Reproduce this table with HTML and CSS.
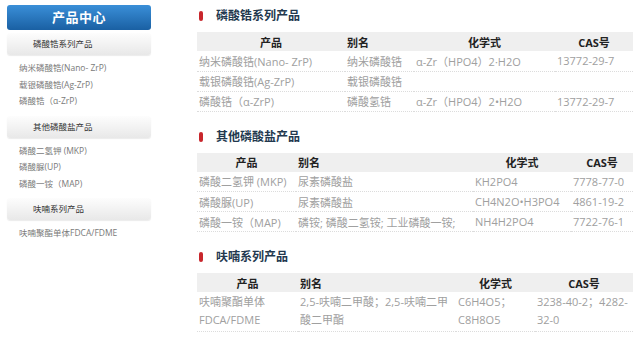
FILE: index.html
```html
<!DOCTYPE html>
<html lang="zh-CN">
<head>
<meta charset="utf-8">
<title>产品中心</title>
<link rel="stylesheet" href="styles.css">
</head>
<body>
<div class="page">
  <aside class="sidebar">
    <div class="side-head">产品中心</div>
    <div class="cat">磷酸锆系列产品</div>
    <ul class="items">
      <li>纳米磷酸锆(Nano- ZrP)</li>
      <li>载银磷酸锆(Ag-ZrP)</li>
      <li>磷酸锆（α-ZrP)</li>
    </ul>
    <div class="cat">其他磷酸盐产品</div>
    <ul class="items">
      <li>磷酸二氢钾 (MKP)</li>
      <li>磷酸脲(UP)</li>
      <li>磷酸一铵（MAP)</li>
    </ul>
    <div class="cat">呋喃系列产品</div>
    <ul class="items">
      <li>呋喃聚酯单体FDCA/FDME</li>
    </ul>
  </aside>

  <main class="main">
    <section class="sec">
      <h2 class="sec-title"><span class="mark"></span>磷酸锆系列产品</h2>
      <table class="tbl">
        <colgroup><col style="width:148px"><col style="width:69px"><col style="width:141px"><col style="width:78px"></colgroup>
        <thead>
          <tr><th class="c">产品</th><th>别名</th><th class="c">化学式</th><th class="c">CAS号</th></tr>
        </thead>
        <tbody>
          <tr><td>纳米磷酸锆(Nano- ZrP)</td><td>纳米磷酸锆</td><td>α-Zr（HPO4）2·H2O</td><td>13772-29-7</td></tr>
          <tr><td>载银磷酸锆(Ag-ZrP)</td><td>载银磷酸锆</td><td></td><td></td></tr>
          <tr><td>磷酸锆（α-ZrP)</td><td>磷酸氢锆</td><td>α-Zr（HPO4）2•H2O</td><td>13772-29-7</td></tr>
        </tbody>
      </table>
    </section>

    <section class="sec">
      <h2 class="sec-title"><span class="mark"></span>其他磷酸盐产品</h2>
      <table class="tbl">
        <colgroup><col style="width:99px"><col style="width:177px"><col style="width:98px"><col style="width:62px"></colgroup>
        <thead>
          <tr><th class="c">产品</th><th>别名</th><th class="c">化学式</th><th class="c">CAS号</th></tr>
        </thead>
        <tbody>
          <tr><td>磷酸二氢钾 (MKP)</td><td>尿素磷酸盐</td><td>KH2PO4</td><td>7778-77-0</td></tr>
          <tr><td>磷酸脲(UP)</td><td>尿素磷酸盐</td><td>CH4N2O•H3PO4</td><td>4861-19-2</td></tr>
          <tr><td>磷酸一铵（MAP)</td><td>磷铵; 磷酸二氢铵; 工业磷酸一铵;</td><td>NH4H2PO4</td><td>7722-76-1</td></tr>
        </tbody>
      </table>
    </section>

    <section class="sec">
      <h2 class="sec-title"><span class="mark"></span>呋喃系列产品</h2>
      <table class="tbl tbl-wrap">
        <colgroup><col style="width:101px"><col style="width:158px"><col style="width:79px"><col style="width:98px"></colgroup>
        <thead>
          <tr><th class="c">产品</th><th>别名</th><th class="c">化学式</th><th class="c">CAS号</th></tr>
        </thead>
        <tbody>
          <tr><td>呋喃聚酯单体<br>FDCA/FDME</td><td>2,5-呋喃二甲酸；2,5-呋喃二甲<br>酸二甲酯</td><td>C6H4O5；<br>C8H8O5</td><td>3238-40-2；4282-<br>32-0</td></tr>
        </tbody>
      </table>
    </section>
  </main>
</div>
</body>
</html>
```

FILE: styles.css
```css
* { box-sizing: border-box; }
html, body { margin: 0; padding: 0; background: #fff; }
body {
  font-family: "Open Sans", "Noto Sans CJK SC", sans-serif;
  width: 640px;
  height: 338px;
  overflow: hidden;
}
.page {
  display: flex;
  align-items: flex-start;
}
.sidebar {
  width: 144px;
  margin: 5px 0 0 7px;
  flex: none;
}
.side-head {
  height: 25px;
  line-height: 25px;
  text-align: center;
  color: #fff;
  font-weight: bold;
  font-size: 13px;
  border-radius: 3px;
  background: linear-gradient(#3a8fd8, #1a60a3);
  margin-bottom: 3px;
  letter-spacing: 0.5px;
}
.cat {
  height: 22px;
  line-height: 22px;
  padding-left: 26px;
  font-size: 8.5px;
  color: #333;
  border-radius: 3px;
  background: linear-gradient(#fdfdfd, #e8e8e8);
  box-shadow: 0 1px 1px rgba(0,0,0,0.08);
}
.items {
  list-style: none;
  margin: 0;
  padding: 5px 0 6px 12px;
}
.items li {
  font-size: 8.5px;
  line-height: 16.5px;
  color: #7a7a7a;
  white-space: nowrap;
}
.main {
  margin-left: 46px;
  width: 436px;
  flex: none;
  display: flex;
  flex-direction: column;
  gap: 15px;
  padding-top: 6px;
}
.sec-title {
  margin: 0 0 6px 0;
  height: 20px;
  line-height: 20px;
  font-size: 12px;
  font-weight: bold;
  color: #22384e;
  display: flex;
  align-items: center;
}
.mark {
  width: 4px;
  height: 10px;
  border-radius: 2px;
  background: #c8262c;
  margin: 0 13px 0 2px;
}
.tbl {
  width: 436px;
  table-layout: fixed;
  border-collapse: collapse;
}
.tbl th {
  height: 19px;
  padding: 0 2px;
  background: #efefef;
  font-size: 11px;
  font-weight: bold;
  color: #222;
  text-align: left;
  white-space: nowrap;
}
.tbl th.c { text-align: center; }
.tbl td {
  height: 20px;
  padding: 0 2px;
  font-size: 11px;
  color: #a0a0a0;
  white-space: nowrap;
  border-bottom: 1px dotted #dcdcdc;
  overflow: hidden;
}
.tbl-wrap td {
  height: 39px;
  line-height: 18px;
}
```
